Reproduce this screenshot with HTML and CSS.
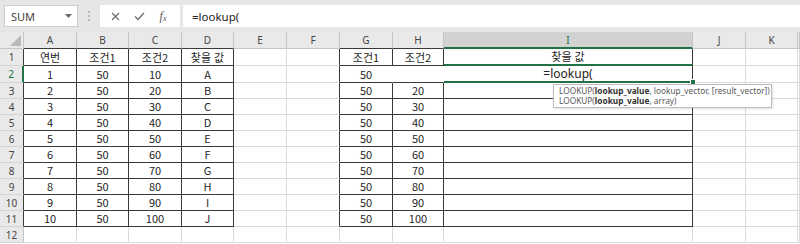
FILE: index.html
```html
<!DOCTYPE html>
<html lang="ko">
<head>
<meta charset="utf-8">
<title>LOOKUP</title>
<link rel="stylesheet" href="styles.css">
</head>
<body>
<div class="bar">
  <div class="namebox"><span>SUM</span><svg class="dd" width="7" height="4" viewBox="0 0 7 4"><polygon points="0,0 7,0 3.5,4" fill="#6a6a6a"/></svg></div>
  <div class="grip"><svg width="2" height="10" viewBox="0 0 2 10"><circle cx="1" cy="1" r="0.9" fill="#a0a0a0"/><circle cx="1" cy="5" r="0.9" fill="#a0a0a0"/><circle cx="1" cy="9" r="0.9" fill="#a0a0a0"/></svg></div>
  <div class="btns">
    <span class="slot"><svg width="9" height="9" viewBox="0 0 9 9"><path d="M1 1L8 8M8 1L1 8" stroke="#6b6b6b" stroke-width="1.2" fill="none"/></svg></span>
    <span class="slot"><svg width="11" height="9" viewBox="0 0 11 9"><path d="M1 4.5L4 7.5L10 1" stroke="#6b6b6b" stroke-width="1.3" fill="none"/></svg></span>
    <span class="slot fx"><i>f</i><span class="sx">x</span></span>
  </div>
  <div class="formula">=lookup(</div>
</div>

<div class="sheet">
  <!-- header -->
  <div class="corner"><svg width="11" height="11" viewBox="0 0 11 11"><polygon points="11,0 11,11 0,11" fill="#b9b9b9"/></svg></div>
  <div class="ch tb">A</div><div class="ch tb">B</div><div class="ch tb">C</div><div class="ch tb">D</div>
  <div class="ch">E</div><div class="ch">F</div>
  <div class="ch tb">G</div><div class="ch tb">H</div><div class="ch sel">I</div>
  <div class="ch">J</div><div class="ch">K</div><div class="ch"></div>

  <!-- row 1 -->
  <div class="rh rk">1</div>
  <div class="t">연번</div><div class="t">조건1</div><div class="t">조건2</div><div class="t">찾을 값</div>
  <div></div><div class="tr"></div>
  <div class="t">조건1</div><div class="t">조건2</div><div class="t gb">찾을 값</div>
  <div></div><div></div><div></div>

  <!-- row 2 -->
  <div class="rh rk act">2</div>
  <div class="t">1</div><div class="t">50</div><div class="t">10</div><div class="t">A</div>
  <div></div><div class="tr"></div>
  <div class="t nr">50</div><div class="t nr"></div>
  <div class="t ed">=lookup(<span class="handle"></span>
    <div class="tip"><div>LOOKUP(<b>lookup_value</b>, lookup_vector, [result_vector])</div><div>LOOKUP(<b>lookup_value</b>, array)</div></div>
  </div>
  <div></div><div></div><div></div>

  <!-- row 3 -->
  <div class="rh rk">3</div>
  <div class="t">2</div><div class="t">50</div><div class="t">20</div><div class="t">B</div>
  <div></div><div class="tr"></div>
  <div class="t">50</div><div class="t">20</div><div class="t"></div>
  <div></div><div></div><div></div>

  <!-- row 4 -->
  <div class="rh rk">4</div>
  <div class="t">3</div><div class="t">50</div><div class="t">30</div><div class="t">C</div>
  <div></div><div class="tr"></div>
  <div class="t">50</div><div class="t">30</div><div class="t"></div>
  <div></div><div></div><div></div>

  <!-- row 5 -->
  <div class="rh rk">5</div>
  <div class="t">4</div><div class="t">50</div><div class="t">40</div><div class="t">D</div>
  <div></div><div class="tr"></div>
  <div class="t">50</div><div class="t">40</div><div class="t"></div>
  <div></div><div></div><div></div>

  <!-- row 6 -->
  <div class="rh rk">6</div>
  <div class="t">5</div><div class="t">50</div><div class="t">50</div><div class="t">E</div>
  <div></div><div class="tr"></div>
  <div class="t">50</div><div class="t">50</div><div class="t"></div>
  <div></div><div></div><div></div>

  <!-- row 7 -->
  <div class="rh rk">7</div>
  <div class="t">6</div><div class="t">50</div><div class="t">60</div><div class="t">F</div>
  <div></div><div class="tr"></div>
  <div class="t">50</div><div class="t">60</div><div class="t"></div>
  <div></div><div></div><div></div>

  <!-- row 8 -->
  <div class="rh rk">8</div>
  <div class="t">7</div><div class="t">50</div><div class="t">70</div><div class="t">G</div>
  <div></div><div class="tr"></div>
  <div class="t">50</div><div class="t">70</div><div class="t"></div>
  <div></div><div></div><div></div>

  <!-- row 9 -->
  <div class="rh rk">9</div>
  <div class="t">8</div><div class="t">50</div><div class="t">80</div><div class="t">H</div>
  <div></div><div class="tr"></div>
  <div class="t">50</div><div class="t">80</div><div class="t"></div>
  <div></div><div></div><div></div>

  <!-- row 10 -->
  <div class="rh rk">10</div>
  <div class="t">9</div><div class="t">50</div><div class="t">90</div><div class="t">I</div>
  <div></div><div class="tr"></div>
  <div class="t">50</div><div class="t">90</div><div class="t"></div>
  <div></div><div></div><div></div>

  <!-- row 11 -->
  <div class="rh rk">11</div>
  <div class="t">10</div><div class="t">50</div><div class="t">100</div><div class="t">J</div>
  <div></div><div class="tr"></div>
  <div class="t">50</div><div class="t">100</div><div class="t"></div>
  <div></div><div></div><div></div>

  <!-- row 12 -->
  <div class="rh">12</div>
  <div></div><div></div><div></div><div></div><div></div><div></div>
  <div></div><div></div><div></div><div></div><div></div><div></div>
</div>
</body>
</html>
```

FILE: styles.css
```css
* { box-sizing: border-box; margin: 0; padding: 0; }
html, body { width: 800px; height: 244px; overflow: hidden; background: #fff; }
body { font-family: "Noto Sans", "Noto Sans CJK KR", sans-serif; }

/* formula bar */
.bar {
  display: flex;
  height: 32px;
  padding: 5px 0 5px 4px;
  background: #e6e6e6;
}
.namebox {
  width: 74px;
  height: 22px;
  background: #fff;
  border: 1px solid #cdcdcd;
  display: flex;
  align-items: center;
  justify-content: space-between;
  padding: 0 5px 0 6px;
  font-size: 11px;
  color: #444;
}
.grip { width: 22px; display: flex; align-items: center; justify-content: center; }
.btns {
  width: 80px;
  height: 22px;
  background: #fff;
  display: flex;
  align-items: center;
  gap: 8px;
  padding-left: 7px;
}
.slot { width: 16px; display: flex; align-items: center; justify-content: center; }
.fx { font-family: "Liberation Serif", serif; font-size: 12px; color: #555; }
.fx i { font-style: italic; }
.sx { font-size: 8px; font-style: italic; margin-top: 4px; }
.formula {
  flex: 1;
  height: 22px;
  margin-left: 3px;
  background: #fff;
  display: flex;
  align-items: center;
  padding-left: 9px;
  font-size: 11.5px;
  color: #222;
}

/* sheet grid */
.sheet {
  display: grid;
  grid-template-columns: 24px 53px 52px 53px 52px 53px 53px 53px 51px 249px 53px 52px 2px;
  grid-template-rows: 17px 17px 17px repeat(10, 16px);
  font-family: "Noto Sans CJK KR", "Noto Sans", sans-serif;
  font-size: 11px;
  color: #1e1e1e;
}
.sheet > div {
  display: flex;
  align-items: center;
  justify-content: center;
  border-right: 1px solid #dadada;
  border-bottom: 1px solid #dadada;
  background: #fff;
  white-space: nowrap;
  line-height: 1;
}
.sheet > .corner {
  background: #e9e9e9;
  border-right-color: #c6c6c6;
  border-bottom-color: #c6c6c6;
  align-items: flex-end;
  justify-content: flex-end;
  padding: 0 2px 2px 0;
}
.sheet > .ch {
  background: #e9e9e9;
  border-right-color: #c6c6c6;
  border-bottom-color: #c6c6c6;
  font-family: "Noto Sans", sans-serif;
  font-size: 10px;
  color: #444;
}
.sheet > .rh {
  background: #e9e9e9;
  border-right-color: #c6c6c6;
  border-bottom-color: #d4d4d4;
  font-family: "Noto Sans", sans-serif;
  font-size: 10px;
  color: #444;
}
.sheet > .tb { border-bottom-color: #3a3a3a; }
.sheet > .rk { border-right-color: #3a3a3a; }
.sheet > .tr { border-right-color: #3a3a3a; }
.sheet > .t { border-right-color: #3a3a3a; border-bottom-color: #3a3a3a; }
.sheet > .sel {
  background: #d2d2d2;
  color: #217346;
  border-bottom: 2px solid #217346;
}
.sheet > .act {
  color: #217346;
  border-right: 2px solid #217346;
}
.sheet > .gb { border-bottom: 2px solid #217346; }
.sheet > .nr { border-right-color: #fff; }
.sheet > .ed {
  position: relative;
  z-index: 3;
  font-family: "Noto Sans", sans-serif;
  font-size: 12px;
  border-bottom: 2px solid #217346;
}
.handle {
  position: absolute;
  right: -4px;
  bottom: -4px;
  width: 6px;
  height: 6px;
  background: #217346;
  border: 1px solid #fff;
}
.tip {
  position: absolute;
  left: 109px;
  top: 18px;
  width: 219px;
  height: 24px;
  background: #fff;
  border: 1px solid #bdbdbd;
  box-shadow: 1px 1px 2px rgba(0,0,0,0.12);
  padding: 1px 0 0 5px;
  font-family: "Noto Sans", sans-serif;
  font-size: 8.3px;
  line-height: 10px;
  color: #5a5a5a;
  text-align: left;
}
.tip b { color: #333; font-weight: 700; }
```
